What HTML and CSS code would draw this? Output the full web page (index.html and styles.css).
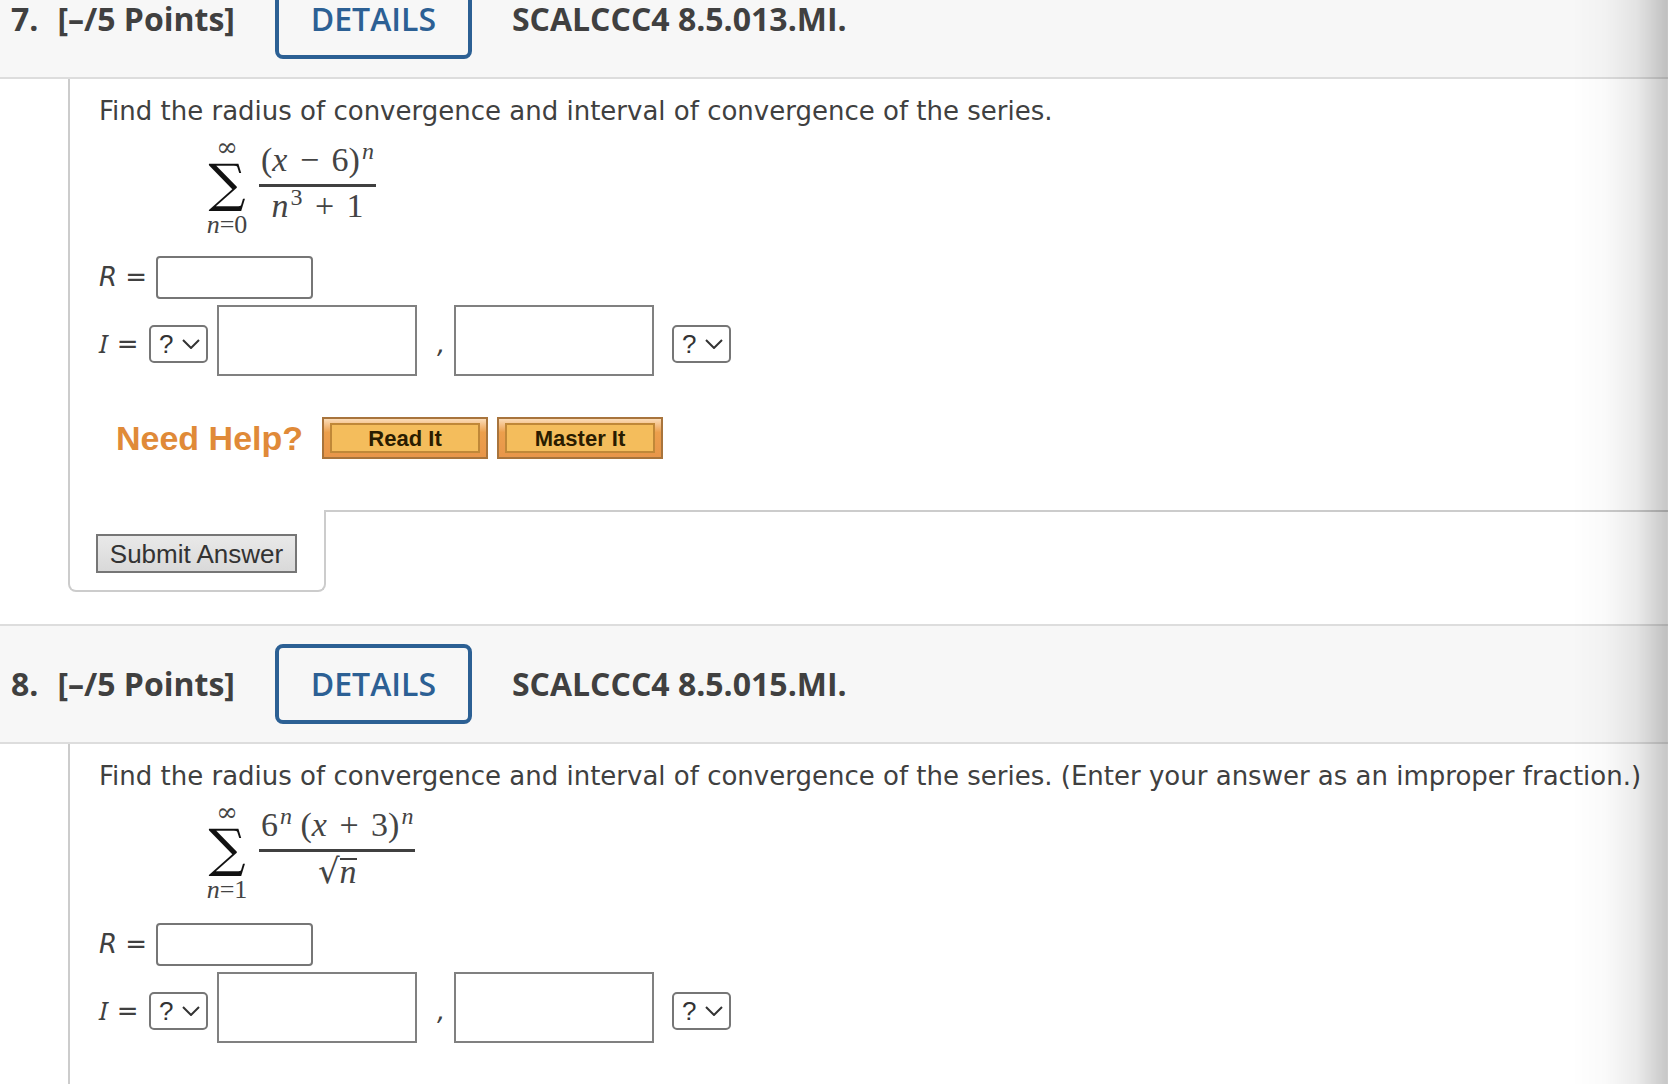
FILE: index.html
```
<!DOCTYPE html>
<html lang="en">
<head>
  <meta charset="UTF-8">
  <meta name="viewport" content="width=device-width, initial-scale=1.0">
  <title>Homework</title>
  <link rel="stylesheet" href="styles.css">
</head>
<body>
  <main class="assignment">
    <section class="question">
      <header class="question-header">
        <h2 class="number">7.</h2>
        <span class="points">[–/5 Points]</span>
        <button type="button" class="details">DETAILS</button>
        <span class="source">SCALCCC4 8.5.013.MI.</span>
      </header>
      <div class="question-body">
        <p class="prompt">Find the radius of convergence and interval of convergence of the series.</p>
        <div class="formula">
          <div class="sum">
            <span class="limit infinity">∞</span>
            <span class="sigma">∑</span>
            <span class="limit"><i>n</i>=0</span>
          </div>
          <div class="fraction">
            <div class="top">(<i>x</i> <span class="op">−</span> 6)<sup><i>n</i></sup></div>
            <div class="bottom"><i>n</i><sup>3</sup> <span class="op">+</span> 1</div>
          </div>
        </div>
        <div class="answer-row">
          <label for="r7" class="radius-label"><i>R</i> =</label>
          <input type="text" id="r7" class="radius">
        </div>
        <div class="answer-row">
          <label for="open7" class="interval-label"><i>I</i> =</label>
          <span class="picker">
            <select id="open7"><option>?</option><option>(</option><option>[</option></select>
            <svg class="chevron" viewBox="0 0 18 10"><path d="M1 1l8 8 8-8"/></svg>
          </span>
          <input type="text" class="endpoint" aria-label="Left endpoint">
          <i class="comma">,</i>
          <input type="text" class="endpoint" aria-label="Right endpoint">
          <span class="picker closing">
            <select aria-label="Closing bracket"><option>?</option><option>)</option><option>]</option></select>
            <svg class="chevron" viewBox="0 0 18 10"><path d="M1 1l8 8 8-8"/></svg>
          </span>
        </div>
        <div class="help">
          <span class="help-title">Need Help?</span>
          <button type="button" class="help-btn"><span>Read It</span></button>
          <button type="button" class="help-btn"><span>Master It</span></button>
        </div>
      </div>
      <footer class="question-footer">
        <div class="submit-tab">
          <button type="submit" class="submit">Submit Answer</button>
        </div>
        <div class="footer-line"></div>
      </footer>
    </section>

    <section class="question last">
      <header class="question-header">
        <h2 class="number">8.</h2>
        <span class="points">[–/5 Points]</span>
        <button type="button" class="details">DETAILS</button>
        <span class="source">SCALCCC4 8.5.015.MI.</span>
      </header>
      <div class="question-body">
        <p class="prompt">Find the radius of convergence and interval of convergence of the series. (Enter your answer as an improper fraction.)</p>
        <div class="formula with-root">
          <div class="sum">
            <span class="limit infinity">∞</span>
            <span class="sigma">∑</span>
            <span class="limit"><i>n</i>=1</span>
          </div>
          <div class="fraction">
            <div class="top">6<sup><i>n</i></sup> (<i>x</i> <span class="op">+</span> 3)<sup><i>n</i></sup></div>
            <div class="bottom"><span class="root">√</span><i class="radicand">n</i></div>
          </div>
        </div>
        <div class="answer-row">
          <label for="r8" class="radius-label"><i>R</i> =</label>
          <input type="text" id="r8" class="radius">
        </div>
        <div class="answer-row">
          <label for="open8" class="interval-label"><i>I</i> =</label>
          <span class="picker">
            <select id="open8"><option>?</option><option>(</option><option>[</option></select>
            <svg class="chevron" viewBox="0 0 18 10"><path d="M1 1l8 8 8-8"/></svg>
          </span>
          <input type="text" class="endpoint" aria-label="Left endpoint">
          <i class="comma">,</i>
          <input type="text" class="endpoint" aria-label="Right endpoint">
          <span class="picker closing">
            <select aria-label="Closing bracket"><option>?</option><option>)</option><option>]</option></select>
            <svg class="chevron" viewBox="0 0 18 10"><path d="M1 1l8 8 8-8"/></svg>
          </span>
        </div>
      </div>
    </section>
  </main>
  <div class="edge-shadow"></div>
</body>
</html>
```
FILE: styles.css
```
* {
  box-sizing: border-box;
}
body {
  margin: 0;
  overflow: hidden;
  height: 100vh;
  background-color: #fff;
  color: #404040;
  font-family: Verdana, "DejaVu Sans", sans-serif;
  font-size: 26px;
  line-height: 32px;
}
/* first question is scrolled part way off the top */
.assignment {
  display: flex;
  flex-direction: column;
  min-height: calc(100vh + 41px);
  margin-top: -41px;
}
.last {
  display: flex;
  flex: 1;
  flex-direction: column;
}
.last .question-body {
  flex: 1;
}

/* header */
.question-header {
  display: flex;
  align-items: center;
  height: 120px;
  padding-left: 11px;
  background-color: #f7f7f7;
  border-top: 2px solid #ddd;
  border-bottom: 2px solid #ddd;
  font-family: "Open Sans", sans-serif;
  font-size: 32px;
  font-weight: 700;
  white-space: nowrap;
}
.number {
  margin: 0 19px 0 0;
  font-size: 32px;
}
.details {
  width: 197px;
  height: 80px;
  margin: 0 40px;
  padding: 0 0 2px;
  background: none;
  border: 4px solid #2c6094;
  border-radius: 8px;
  color: #2c6094;
  font: 600 32px "Open Sans", sans-serif;
}

/* body */
.question-body {
  margin-left: 68px;
  padding: 16px 0 0 29px;
  border-left: 2px solid #ccc;
}
.prompt {
  margin: 0;
  white-space: nowrap;
}
.formula {
  display: flex;
  gap: 10px;
  height: 119px;
  margin: 10px 0 0 106px;
  color: #444;
  font-family: "Liberation Serif", serif;
  font-size: 34px;
}
.with-root {
  height: 121px;
}
.sum {
  display: flex;
  flex-direction: column;
  align-items: center;
  width: 44px;
}
.limit {
  font-size: 26px;
  line-height: 20px;
}
.infinity,
.sigma,
.root {
  font-family: "DejaVu Serif", serif;
}
.sigma {
  margin-bottom: 6px;
  color: #111;
  font-size: 52px;
  line-height: 52px;
}
.fraction {
  padding-top: 4px;
  text-align: center;
}
.fraction sup {
  margin-left: 2px;
  font-size: 24px;
  line-height: 0;
}
.op {
  margin: 0 4px;
}
.top {
  height: 46px;
  padding: 0 2px;
  line-height: 38px;
  border-bottom: 3px solid #404040;
}
.bottom {
  line-height: 38px;
}
.radicand {
  display: inline-block;
  border-top: 2px solid #404040;
  line-height: 24px;
}

/* answers */
.answer-row {
  display: flex;
  align-items: baseline;
  margin-bottom: 6px;
}
.radius-label {
  width: 57px;
}
.interval-label {
  width: 50px;
}
.interval-label i {
  margin-right: 1px;
  font-family: "Noto Sans", sans-serif;
  line-height: 1;
}
input {
  padding: 0 8px;
  background-color: #fff;
  font: 26px "Liberation Sans", Arial, sans-serif;
}
.radius {
  width: 157px;
  height: 43px;
  border: 2px solid #767676;
  border-radius: 4px;
}
.endpoint {
  width: 200px;
  height: 71px;
  padding-top: 8px;
  border: 2px solid #808080;
}
.comma {
  width: 37px;
  padding-left: 20px;
}
.picker {
  position: relative;
  margin-right: 9px;
}
.closing {
  margin-left: 18px;
}
select {
  width: 59px;
  height: 38px;
  padding: 0 8px;
  appearance: none;
  background-color: #fff;
  border: 2px solid #767676;
  border-radius: 5px;
  color: #333;
  font: 26px "Liberation Sans", Arial, sans-serif;
}
.chevron {
  position: absolute;
  right: 8px;
  top: 14px;
  width: 18px;
  height: 10px;
  fill: none;
  stroke: #333;
  stroke-width: 2;
  pointer-events: none;
}

/* help */
.help {
  display: flex;
  align-items: center;
  gap: 9px;
  padding: 35px 0 51px 17px;
}
.help-title {
  margin-right: 10px;
  color: #e08a38;
  font: bold 34px/36px "Liberation Sans", Arial, sans-serif;
}
.help-btn {
  width: 166px;
  height: 42px;
  padding: 4px 6px;
  border: 2px solid #a8743c;
  background: linear-gradient(#fbdcb8, #ec9f4c 35%, #e8964a);
  color: #2a1c00;
  font: bold 22px/24px "Liberation Sans", Arial, sans-serif;
}
.help-btn span {
  display: block;
  height: 30px;
  padding-top: 2px;
  background-color: #f4bd5c;
  border: 2px solid #c08838;
}

/* footer */
.question-footer {
  display: flex;
  margin-bottom: 32px;
}
.submit-tab {
  width: 258px;
  height: 82px;
  margin-left: 68px;
  padding: 24px 0 0 26px;
  border: 2px solid #ccc;
  border-top: none;
  border-radius: 0 0 8px 8px;
}
.submit {
  display: block;
  width: 201px;
  height: 39px;
  padding: 0;
  background: linear-gradient(#e9e9e9, #d9d9d9);
  border: 2px solid #767676;
  color: #333;
  font: 26px/34px "Liberation Sans", Arial, sans-serif;
}
.footer-line {
  flex: 1;
  border-top: 2px solid #ccc;
}

.edge-shadow {
  position: fixed;
  top: 0;
  right: 0;
  bottom: 0;
  width: 96px;
  border-right: 1px solid rgba(0, 0, 0, 0.2);
  background: linear-gradient(to right, rgba(0, 0, 0, 0), rgba(0, 0, 0, 0.02) 35%, rgba(0, 0, 0, 0.08) 68%, rgba(0, 0, 0, 0.22));
  pointer-events: none;
}
```
